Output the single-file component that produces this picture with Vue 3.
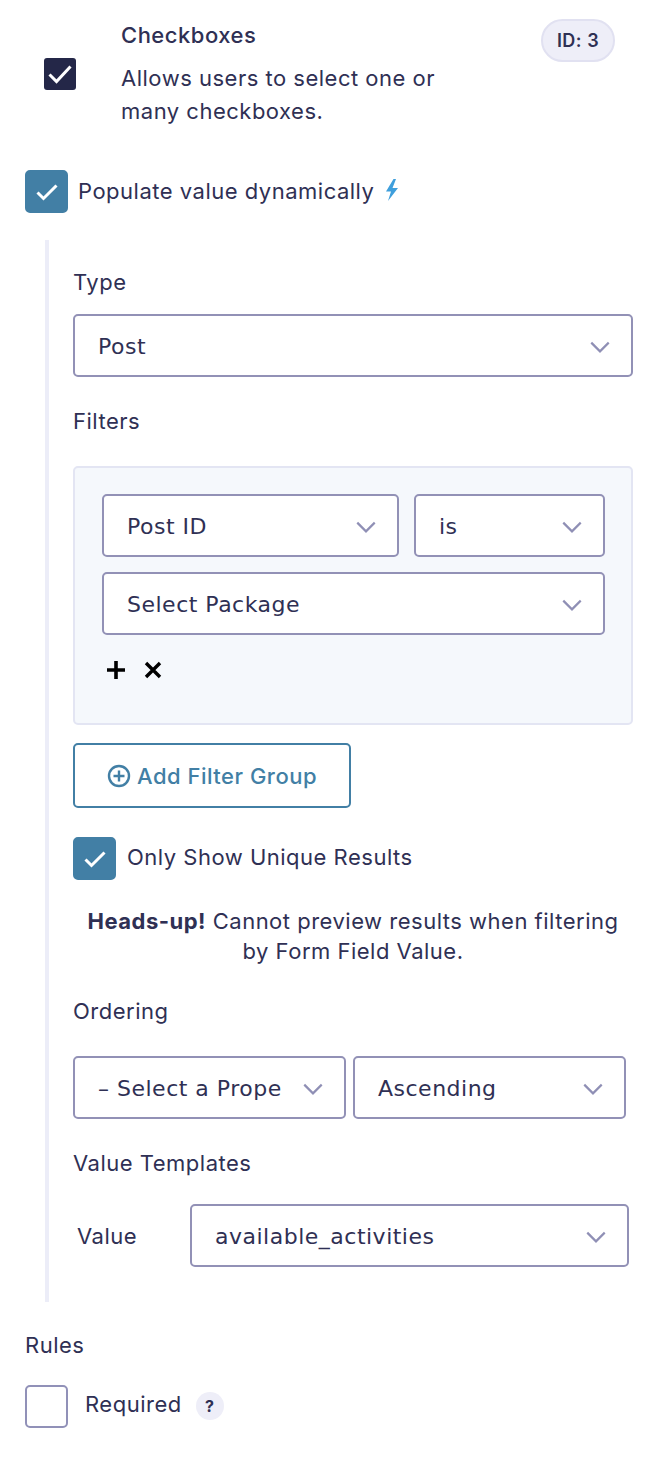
<script setup>
const chevron = 'M1 1.5l8 8 8-8'
</script>

<template>
  <div class="panel">
    <div class="field-head">
      <div class="small-check">
        <svg width="26" height="20" viewBox="0 0 26 20"><path d="M2.5 10.5l7 7L23.5 2.5" fill="none" stroke="#fff" stroke-width="3" /></svg>
      </div>
      <div class="head-text">
        <h3>Checkboxes</h3>
        <p>Allows users to select one or<br>many checkboxes.</p>
      </div>
      <span class="id-badge">ID: 3</span>
    </div>

    <div class="check-row populate">
      <div class="check on">
        <svg width="22" height="18" viewBox="0 0 22 18"><path d="M1.5 9.5l6 6L20.5 2.5" fill="none" stroke="#fff" stroke-width="3" /></svg>
      </div>
      <span>Populate value dynamically</span>
      <svg class="bolt" width="16" height="24" viewBox="0 0 16 24"><path d="M9.5 1L2 13.5h5L4 23l10-13H8.5L12 1z" fill="#3f9fdc" /></svg>
    </div>

    <div class="dynamic">
      <div class="label">Type</div>
      <div class="select"><span>Post</span>
        <svg class="chev" width="20" height="12" viewBox="0 0 18 11"><path :d="chevron" fill="none" stroke="#8f8fb5" stroke-width="2" /></svg>
      </div>

      <div class="label filters-label">Filters</div>
      <div class="filter-box">
        <div class="filter-row">
          <div class="select grow"><span>Post ID</span>
            <svg class="chev" width="20" height="12" viewBox="0 0 18 11"><path :d="chevron" fill="none" stroke="#8f8fb5" stroke-width="2" /></svg>
          </div>
          <div class="select op"><span>is</span>
            <svg class="chev" width="20" height="12" viewBox="0 0 18 11"><path :d="chevron" fill="none" stroke="#8f8fb5" stroke-width="2" /></svg>
          </div>
        </div>
        <div class="select"><span>Select Package</span>
          <svg class="chev" width="20" height="12" viewBox="0 0 18 11"><path :d="chevron" fill="none" stroke="#8f8fb5" stroke-width="2" /></svg>
        </div>
        <div class="filter-actions">
          <svg width="20" height="20" viewBox="0 0 20 20"><path d="M10 1v18M1 10h18" stroke="#000" stroke-width="3.6" /></svg>
          <svg width="18" height="18" viewBox="0 0 18 18"><path d="M2 2l14 14M16 2L2 16" stroke="#000" stroke-width="3.4" /></svg>
        </div>
      </div>

      <button class="add-group">
        <svg width="24" height="24" viewBox="0 0 24 24"><circle cx="12" cy="12" r="10" fill="none" stroke="#427fa5" stroke-width="2.4" /><path d="M12 6.5v11M6.5 12h11" stroke="#427fa5" stroke-width="2.4" /></svg>
        Add Filter Group
      </button>

      <div class="check-row unique">
        <div class="check on">
          <svg width="22" height="18" viewBox="0 0 22 18"><path d="M1.5 9.5l6 6L20.5 2.5" fill="none" stroke="#fff" stroke-width="3" /></svg>
        </div>
        <span>Only Show Unique Results</span>
      </div>

      <p class="headsup"><b>Heads-up!</b> Cannot preview results when filtering<br>by Form Field Value.</p>

      <div class="label ordering">Ordering</div>
      <div class="order-row">
        <div class="select"><span>– Select a Prope</span>
          <svg class="chev" width="20" height="12" viewBox="0 0 18 11"><path :d="chevron" fill="none" stroke="#8f8fb5" stroke-width="2" /></svg>
        </div>
        <div class="select"><span>Ascending</span>
          <svg class="chev" width="20" height="12" viewBox="0 0 18 11"><path :d="chevron" fill="none" stroke="#8f8fb5" stroke-width="2" /></svg>
        </div>
      </div>

      <div class="label templates">Value Templates</div>
      <div class="value-row">
        <span class="value-label">Value</span>
        <div class="select grow"><span>available_activities</span>
          <svg class="chev" width="20" height="12" viewBox="0 0 18 11"><path :d="chevron" fill="none" stroke="#8f8fb5" stroke-width="2" /></svg>
        </div>
      </div>
    </div>

    <div class="label rules">Rules</div>
    <div class="check-row required">
      <div class="check"></div>
      <span>Required</span>
      <i class="help">?</i>
    </div>
  </div>
</template>

<style scoped>
.panel {
  box-sizing: border-box;
  width: 658px;
  height: 1470px;
  padding: 0 25px;
  background: #fff;
  color: #2f3054;
  font-family: Inter, sans-serif;
  font-size: 22px;
  letter-spacing: 0.5px;
  overflow: hidden;
}

.field-head {
  display: flex;
  align-items: flex-start;
  height: 170px;
  padding-left: 19px;
  position: relative;
}

.small-check {
  width: 32px;
  height: 32px;
  margin-top: 58px;
  border-radius: 3px;
  background: #242748;
  display: flex;
  align-items: center;
  justify-content: center;
}

.head-text {
  margin-left: 45px;
  padding-top: 21px;
}

.head-text h3 {
  margin: 0;
  font-size: 22px;
  line-height: 28px;
  font-weight: 500;
}

.head-text p {
  margin: 13px 0 0;
  line-height: 33px;
}

.id-badge {
  position: absolute;
  top: 19px;
  left: 516px;
  width: 74px;
  height: 43px;
  box-sizing: border-box;
  border: 2px solid #e1e1f1;
  border-radius: 22px;
  background: #eeeef8;
  font-size: 18px;
  font-weight: 600;
  text-align: center;
  line-height: 39px;
}

.check-row {
  display: flex;
  align-items: center;
}

.check {
  box-sizing: border-box;
  width: 43px;
  height: 43px;
  flex: none;
  border: 2px solid #9191b8;
  border-radius: 5px;
  background: #fff;
  display: flex;
  align-items: center;
  justify-content: center;
}

.check.on {
  background: #427fa5;
  border-color: #427fa5;
}

.populate span {
  margin-left: 10px;
  margin-top: -2px;
}

.bolt {
  margin: -3px 0 0 10px;
}

.dynamic {
  margin: 27px 0 0 20px;
  height: 1062px;
  box-sizing: border-box;
  border-left: 4px solid #ecedf8;
  padding: 28px 0 0 24px;
}

.label {
  line-height: 28px;
}

.select {
  box-sizing: border-box;
  height: 63px;
  display: flex;
  align-items: center;
  justify-content: space-between;
  padding: 2px 21px 0 23px;
  border: 2px solid #9291b6;
  border-radius: 5px;
  background: #fff;
  font-family: "DejaVu Sans", sans-serif;
  font-size: 22px;
  white-space: nowrap;
}

.dynamic > .select {
  margin-top: 18px;
  width: 560px;
}

.chev {
  flex: none;
}

.filters-label {
  margin-top: 30px;
}

.filter-box {
  box-sizing: border-box;
  width: 560px;
  height: 259px;
  margin-top: 31px;
  padding: 26px 26px 26px 27px;
  background: #f5f8fc;
  border: 2px solid #e3e5f3;
  border-radius: 5px;
  display: flex;
  flex-direction: column;
  gap: 15px;
}

.filter-row {
  display: flex;
  gap: 15px;
}

.grow {
  flex: 1;
}

.op {
  width: 191px;
}

.filter-actions {
  display: flex;
  align-items: center;
  gap: 18px;
  padding: 10px 0 0 4px;
}

.add-group {
  box-sizing: border-box;
  width: 278px;
  height: 65px;
  margin-top: 18px;
  padding: 0 0 0 0;
  display: flex;
  align-items: center;
  justify-content: center;
  gap: 6px;
  border: 2px solid #427fa5;
  border-radius: 5px;
  background: #fff;
  color: #427fa5;
  font-family: Inter, sans-serif;
  font-size: 22px;
  font-weight: 500;
  letter-spacing: 0.5px;
}

.unique {
  margin-top: 29px;
}

.unique span {
  margin-left: 11px;
  margin-top: -4px;
}

.headsup {
  width: 560px;
  margin: 26px 0 0;
  line-height: 30px;
  text-align: center;
}

.ordering {
  margin-top: 31px;
}

.order-row {
  display: flex;
  gap: 7px;
  margin-top: 31px;
  width: 553px;
}

.order-row .select {
  flex: 1 1 0;
  min-width: 0;
}

.templates {
  margin-top: 30px;
}

.value-row {
  display: flex;
  align-items: center;
  width: 556px;
  margin-top: 27px;
}

.value-label {
  width: 117px;
  padding-left: 4px;
  box-sizing: border-box;
}

.rules {
  margin-top: 29px;
}

.required {
  margin-top: 26px;
}

.required span {
  margin-left: 17px;
  margin-top: -5px;
}

.help {
  width: 28px;
  height: 28px;
  margin-left: 14px;
  margin-top: -2px;
  border-radius: 50%;
  background: #eeeef8;
  font-size: 16px;
  font-style: normal;
  font-weight: 700;
  text-align: center;
  line-height: 28px;
}
</style>
